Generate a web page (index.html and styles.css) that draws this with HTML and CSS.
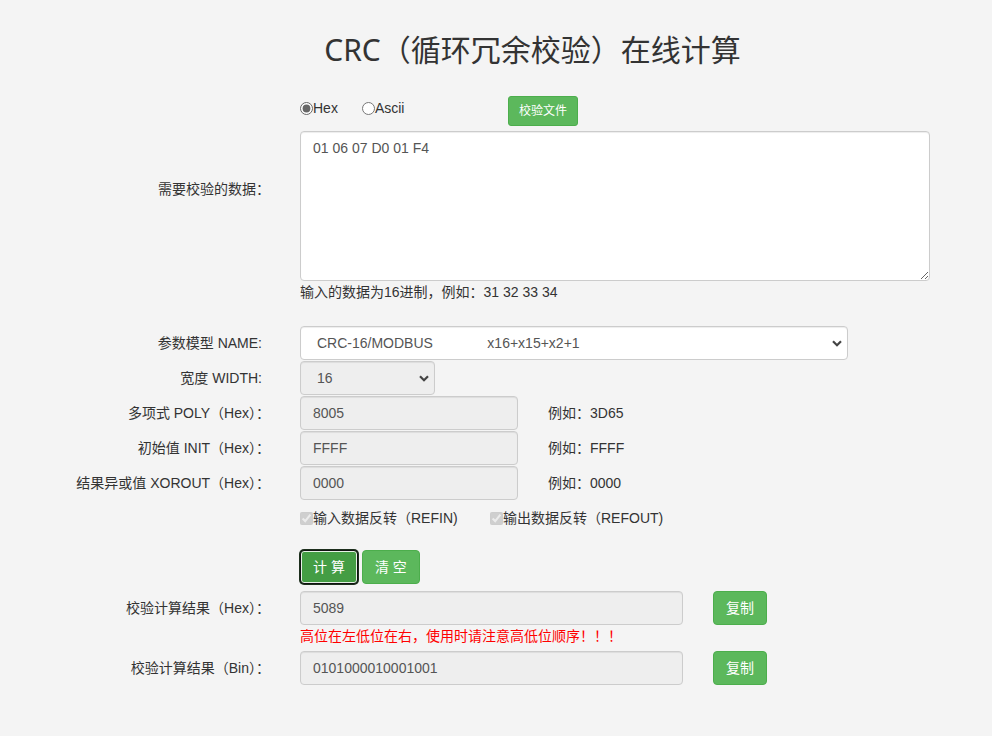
FILE: index.html
```html
<!DOCTYPE html>
<html lang="zh-CN">
<head>
<meta charset="utf-8">
<title>CRC（循环冗余校验）在线计算</title>
<link rel="stylesheet" href="styles.css">
</head>
<body>
<h1 class="title">CRC（循环冗余校验）在线计算</h1>
<div class="form">
  <div class="row row-data">
    <label class="lbl fw">需要校验的数据：</label>
    <div class="ctl">
      <div class="mode">
        <div class="radios">
          <label class="radio"><input type="radio" name="fmt" checked>Hex</label>
          <label class="radio radio-ascii"><input type="radio" name="fmt">Ascii</label>
        </div>
        <button class="btn btn-sm">校验文件</button>
      </div>
      <textarea class="fc textarea">01 06 07 D0 01 F4</textarea>
    </div>
  </div>
  <div class="help">输入的数据为16进制，例如：31 32 33 34</div>

  <div class="row row-first">
    <label class="lbl">参数模型 NAME:</label>
    <div class="select-wrap w-name">
      <select class="fc sel">
        <option>CRC-16/MODBUS&nbsp;&nbsp;&nbsp;&nbsp;&nbsp;&nbsp;&nbsp;&nbsp;&nbsp;&nbsp;&nbsp;&nbsp;&nbsp;&nbsp;x16+x15+x2+1</option>
      </select>
      <svg class="chev" width="10" height="7" viewBox="0 0 10 7"><path d="M1 1.2 L5 5.2 L9 1.2" fill="none" stroke="#444" stroke-width="2.2"/></svg>
    </div>
  </div>
  <div class="row">
    <label class="lbl">宽度 WIDTH:</label>
    <div class="select-wrap w-width">
      <select class="fc sel dis"><option>16</option></select>
      <svg class="chev" width="10" height="7" viewBox="0 0 10 7"><path d="M1 1.2 L5 5.2 L9 1.2" fill="none" stroke="#444" stroke-width="2.2"/></svg>
    </div>
  </div>
  <div class="row">
    <label class="lbl fw">多项式 POLY（Hex）：</label>
    <input class="fc dis w-param" value="8005" readonly>
    <span class="eg">例如：3D65</span>
  </div>
  <div class="row">
    <label class="lbl fw">初始值 INIT（Hex）：</label>
    <input class="fc dis w-param" value="FFFF" readonly>
    <span class="eg">例如：FFFF</span>
  </div>
  <div class="row">
    <label class="lbl fw">结果异或值 XOROUT（Hex）：</label>
    <input class="fc dis w-param" value="0000" readonly>
    <span class="eg">例如：0000</span>
  </div>

  <div class="checks">
    <label class="chk chk-in"><input type="checkbox" checked disabled>输入数据反转（REFIN)</label>
    <label class="chk"><input type="checkbox" checked disabled>输出数据反转（REFOUT)</label>
  </div>

  <div class="actions">
    <button class="btn btn-focus">计 算</button>
    <button class="btn">清 空</button>
  </div>

  <div class="row row-res">
    <label class="lbl fw">校验计算结果（Hex）：</label>
    <input class="fc dis w-res" value="5089" readonly>
    <button class="btn btn-copy">复制</button>
  </div>
  <div class="warn">高位在左低位在右，使用时请注意高低位顺序！！！</div>
  <div class="row row-bin">
    <label class="lbl fw">校验计算结果（Bin）：</label>
    <input class="fc dis w-res" value="0101000010001001" readonly>
    <button class="btn btn-copy">复制</button>
  </div>
</div>
</body>
</html>
```

FILE: styles.css
```css
* { box-sizing: border-box; }
html, body {
  margin: 0;
  padding: 0;
  background: #f4f4f4;
}
body {
  font-family: "Liberation Sans", "Noto Sans CJK SC", sans-serif;
  font-size: 14px;
  line-height: 20px;
  color: #333;
}
.title {
  margin: 30px 0 0 0;
  padding-left: 73px;
  height: 40px;
  line-height: 40px;
  text-align: center;
  font-family: "Noto Sans", "Noto Sans CJK SC", sans-serif;
  font-size: 30px;
  font-weight: normal;
  color: #333;
}
.form {
  margin-top: 26px;
}
.row {
  display: flex;
  align-items: center;
  margin-bottom: 1px;
}
.lbl {
  flex: none;
  width: 262px;
  margin-right: 38px;
  text-align: right;
  white-space: nowrap;
}
.lbl.fw {
  width: 270px;
  margin-right: 30px;
}
.ctl {
  display: flex;
  flex-direction: column;
}
.mode {
  display: flex;
  align-items: flex-start;
  height: 30px;
}
.radios {
  width: 208px;
  display: flex;
  padding-top: 4px;
}
.radio {
  display: flex;
  align-items: center;
  height: 16px;
}
.radio input {
  margin: 0;
  width: 13px;
  height: 13px;
  accent-color: #666;
}
.radio-ascii {
  margin-left: 24px;
}
.fc {
  display: block;
  height: 34px;
  padding: 6px 12px;
  font-family: "Liberation Sans", "Noto Sans CJK SC", sans-serif;
  font-size: 14px;
  line-height: 20px;
  color: #555;
  background: #fff;
  border: 1px solid #ccc;
  border-radius: 4px;
  box-shadow: inset 0 1px 1px rgba(0,0,0,.075);
  outline: none;
}
.dis {
  background: #eee;
}
.textarea {
  margin-top: 5px;
  width: 630px;
  height: 150px;
  resize: vertical;
}
.help {
  padding-left: 300px;
  height: 20px;
  margin-bottom: 24px;
}
.select-wrap {
  position: relative;
}
.w-name { width: 548px; }
.w-width { width: 135px; }
.sel {
  width: 100%;
  appearance: none;
  -webkit-appearance: none;
  padding-left: 16px;
  white-space: pre;
}
.chev {
  position: absolute;
  right: 6px;
  top: 14px;
  pointer-events: none;
}
.w-param { width: 218px; }
.eg {
  margin-left: 30px;
}
.checks {
  display: flex;
  align-items: center;
  height: 20px;
  margin-top: 8px;
  padding-left: 300px;
}
.chk {
  display: flex;
  align-items: center;
}
.chk input {
  margin: 0;
  width: 13px;
  height: 13px;
}
.chk-in {
  width: 190px;
}
.actions {
  display: flex;
  gap: 4px;
  margin-top: 22px;
  padding-left: 300px;
  height: 34px;
}
.btn {
  font-family: "Liberation Sans", "Noto Sans CJK SC", sans-serif;
  font-size: 14px;
  line-height: 20px;
  padding: 6px 12px;
  color: #fff;
  background: #5cb85c;
  border: 1px solid #4cae4c;
  border-radius: 4px;
  cursor: pointer;
}
.btn-sm {
  font-size: 12px;
  line-height: 18px;
  padding: 5px 10px;
  border-radius: 3px;
}
.btn-focus {
  background: #449d44;
  border-color: #111;
  box-shadow: 0 0 0 1px #1d2f1d, inset 0 0 0 1px #e6f2e6;
}
.row-res {
  margin-top: 7px;
}
.w-res { width: 383px; }
.btn-copy {
  margin-left: 30px;
}
.warn {
  color: #f00;
  padding-left: 300px;
  margin-top: 0px;
  height: 20px;
}
.row-bin {
  margin-top: 5px;
}
```
